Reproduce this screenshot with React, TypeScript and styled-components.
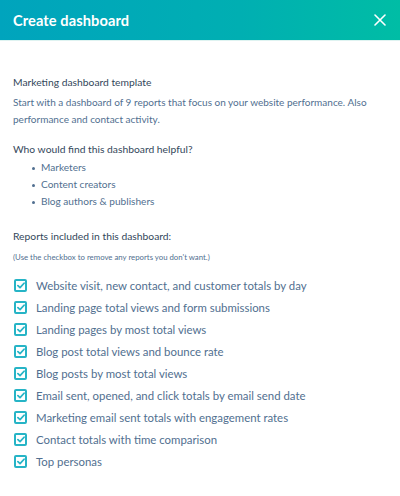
import React from "react";
import styled, { createGlobalStyle } from "styled-components";

const GlobalStyle = createGlobalStyle`
  html, body {
    margin: 0;
    padding: 0;
    background: #ffffff;
  }
  body {
    font-family: Lato, "Noto Sans", "Liberation Sans", sans-serif;
    -webkit-font-smoothing: antialiased;
  }
`;

const Modal = styled.div`
  width: 400px;
  height: 496px;
  background: #ffffff;
  display: flex;
  flex-direction: column;
  overflow: hidden;
`;

const Header = styled.header`
  height: 41px;
  flex-shrink: 0;
  background: linear-gradient(90deg, #00a4bd 0%, #00afb2 60%, #00bda5 100%);
  border-bottom: 1px solid #dff3f1;
  display: flex;
  align-items: center;
  justify-content: space-between;
  padding: 0 13px 0 13px;
  box-sizing: border-box;
`;

const Title = styled.h1`
  margin: 0;
  color: #ffffff;
  font-size: 14.6px;
  font-weight: 700;
  letter-spacing: 0.1px;
  padding-top: 1px;
`;

const CloseButton = styled.button`
  background: none;
  border: none;
  padding: 0;
  width: 14px;
  height: 14px;
  display: flex;
  align-items: center;
  justify-content: center;
  cursor: pointer;
`;

const Body = styled.div`
  padding: 33px 13px 0 13px;
  display: flex;
  flex-direction: column;
`;

const Heading = styled.h2`
  margin: 0;
  font-size: 10.3px;
  line-height: 17px;
  font-weight: 400;
  color: #33475b;
`;

const Paragraph = styled.p`
  margin: 3px 0 0 0;
  font-size: 10px;
  line-height: 17px;
  color: #516f90;
`;

const Section = styled.section<{ $gap: number }>`
  margin-top: ${({ $gap }) => $gap}px;
`;

const Bullets = styled.ul`
  margin: 1px 0 0 0;
  padding: 0 0 0 28px;
  list-style: none;
`;

const Bullet = styled.li`
  position: relative;
  font-size: 10.1px;
  line-height: 17px;
  color: #516f90;
  &::before {
    content: "";
    position: absolute;
    left: -9px;
    top: 8px;
    width: 3px;
    height: 3px;
    border-radius: 50%;
    background: #516f90;
  }
`;

const Hint = styled.p`
  margin: 6px 0 0 0;
  font-size: 7.8px;
  line-height: 12px;
  color: #516f90;
`;

const ReportList = styled.ul`
  margin: 11px 0 0 1px;
  padding: 0;
  list-style: none;
  display: flex;
  flex-direction: column;
`;

const ReportRow = styled.li`
  display: flex;
  align-items: center;
  height: 22px;
  gap: 9px;
`;

const Box = styled.span`
  width: 13px;
  height: 13px;
  box-sizing: border-box;
  border: 2px solid #26b4c6;
  border-radius: 2px;
  background: #ffffff;
  display: flex;
  align-items: center;
  justify-content: center;
  flex-shrink: 0;
`;

const ReportLabel = styled.span`
  font-size: 11.4px;
  color: #516f90;
`;

const reports = [
  "Website visit, new contact, and customer totals by day",
  "Landing page total views and form submissions",
  "Landing pages by most total views",
  "Blog post total views and bounce rate",
  "Blog posts by most total views",
  "Email sent, opened, and click totals by email send date",
  "Marketing email sent totals with engagement rates",
  "Contact totals with time comparison",
  "Top personas",
];

const Check = () => (
  <Box>
    <svg width="8" height="7" viewBox="0 0 9 8">
      <path
        d="M1 4.2 L3.4 6.4 L8 1.4"
        fill="none"
        stroke="#26b4c6"
        strokeWidth="2"
        strokeLinecap="round"
        strokeLinejoin="round"
      />
    </svg>
  </Box>
);

export default function App() {
  return (
    <>
      <GlobalStyle />
      <Modal>
        <Header>
          <Title>Create dashboard</Title>
          <CloseButton aria-label="Close">
            <svg width="12" height="12" viewBox="0 0 12 12">
              <path
                d="M1 1 L11 11 M11 1 L1 11"
                stroke="#ffffff"
                strokeWidth="1.6"
                strokeLinecap="round"
              />
            </svg>
          </CloseButton>
        </Header>
        <Body>
          <Heading>Marketing dashboard template</Heading>
          <Paragraph>
            Start with a dashboard of 9 reports that focus on your website performance. Also
            <br />
            performance and contact activity.
          </Paragraph>
          <Section $gap={13}>
            <Heading>Who would find this dashboard helpful?</Heading>
            <Bullets>
              <Bullet>Marketers</Bullet>
              <Bullet>Content creators</Bullet>
              <Bullet>Blog authors &amp; publishers</Bullet>
            </Bullets>
          </Section>
          <Section $gap={18}>
            <Heading>Reports included in this dashboard:</Heading>
            <Hint>(Use the checkbox to remove any reports you don't want.)</Hint>
            <ReportList>
              {reports.map((r) => (
                <ReportRow key={r}>
                  <Check />
                  <ReportLabel>{r}</ReportLabel>
                </ReportRow>
              ))}
            </ReportList>
          </Section>
        </Body>
      </Modal>
    </>
  );
}
